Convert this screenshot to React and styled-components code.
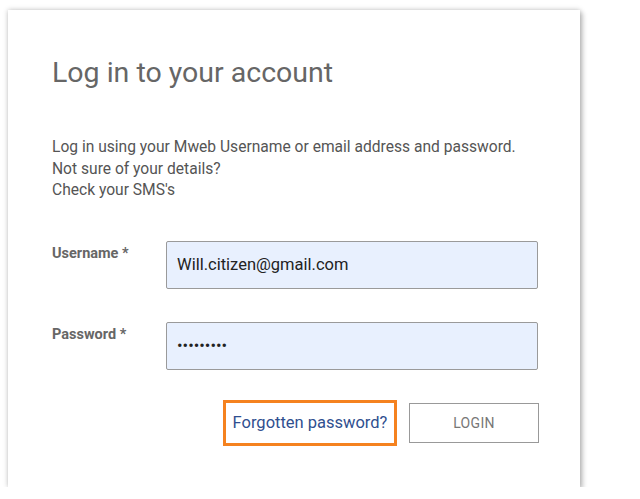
import React from 'react';
import styled, { createGlobalStyle } from 'styled-components';

const Global = createGlobalStyle`
  body {
    margin: 0;
    background: #ffffff;
    font-family: Roboto, "Liberation Sans", Arial, sans-serif;
  }
`;

const Card = styled.div`
  box-sizing: border-box;
  width: 572px;
  height: 477px;
  margin: 10px 0 0 8px;
  padding: 47px 42px 0 44px;
  background: #fff;
  box-shadow: 0 0 5px rgba(0, 0, 0, 0.25), 3px 3px 5px rgba(0, 0, 0, 0.18);
`;

const Title = styled.h1`
  margin: 0;
  font-size: 28.5px;
  line-height: 31px;
  font-weight: 400;
  color: #666666;
`;

const Intro = styled.p`
  margin: 49px 0 0;
  font-size: 15.6px;
  line-height: 21.5px;
  color: #555555;
`;

const Field = styled.div`
  display: flex;
  align-items: flex-start;
  margin-top: ${p => p.$top}px;
`;

const Label = styled.label`
  width: 114px;
  flex: none;
  padding-top: 4px;
  font-size: 14.5px;
  font-weight: 700;
  color: #666666;
`;

const Input = styled.input`
  box-sizing: border-box;
  width: 373px;
  height: 48px;
  padding: 0 10px;
  border: 1px solid #9a9a9a;
  border-radius: 2px;
  background: #e8f0fe;
  font-family: Roboto, "Liberation Sans", Arial, sans-serif;
  font-size: 16.5px;
  color: #222222;
  outline: none;
`;

const Actions = styled.div`
  display: flex;
  align-items: center;
  justify-content: flex-end;
  gap: 12px;
  width: 487px;
  margin-top: 30px;
`;

const Forgot = styled.a`
  box-sizing: border-box;
  display: flex;
  align-items: center;
  justify-content: center;
  width: 174px;
  height: 46px;
  border: 3px solid #f5821f;
  font-size: 16.5px;
  color: #2f4f8f;
  text-decoration: none;
  cursor: pointer;
`;

const LoginButton = styled.button`
  box-sizing: border-box;
  width: 130px;
  height: 40px;
  border: 1px solid #999999;
  background: #ffffff;
  font-family: Roboto, "Liberation Sans", Arial, sans-serif;
  font-size: 14px;
  color: #777777;
  letter-spacing: 0.3px;
  cursor: pointer;
`;

export default function App() {
  return (
    <>
      <Global />
      <Card>
        <Title>Log in to your account</Title>
        <Intro>
          Log in using your Mweb Username or email address and password.
          <br />
          Not sure of your details?
          <br />
          Check your SMS's
        </Intro>
        <Field $top={39}>
          <Label>Username *</Label>
          <Input type="text" value="Will.citizen@gmail.com" readOnly />
        </Field>
        <Field $top={33}>
          <Label>Password *</Label>
          <Input type="password" value="secret123" readOnly />
        </Field>
        <Actions>
          <Forgot>Forgotten password?</Forgot>
          <LoginButton>LOGIN</LoginButton>
        </Actions>
      </Card>
    </>
  );
}
